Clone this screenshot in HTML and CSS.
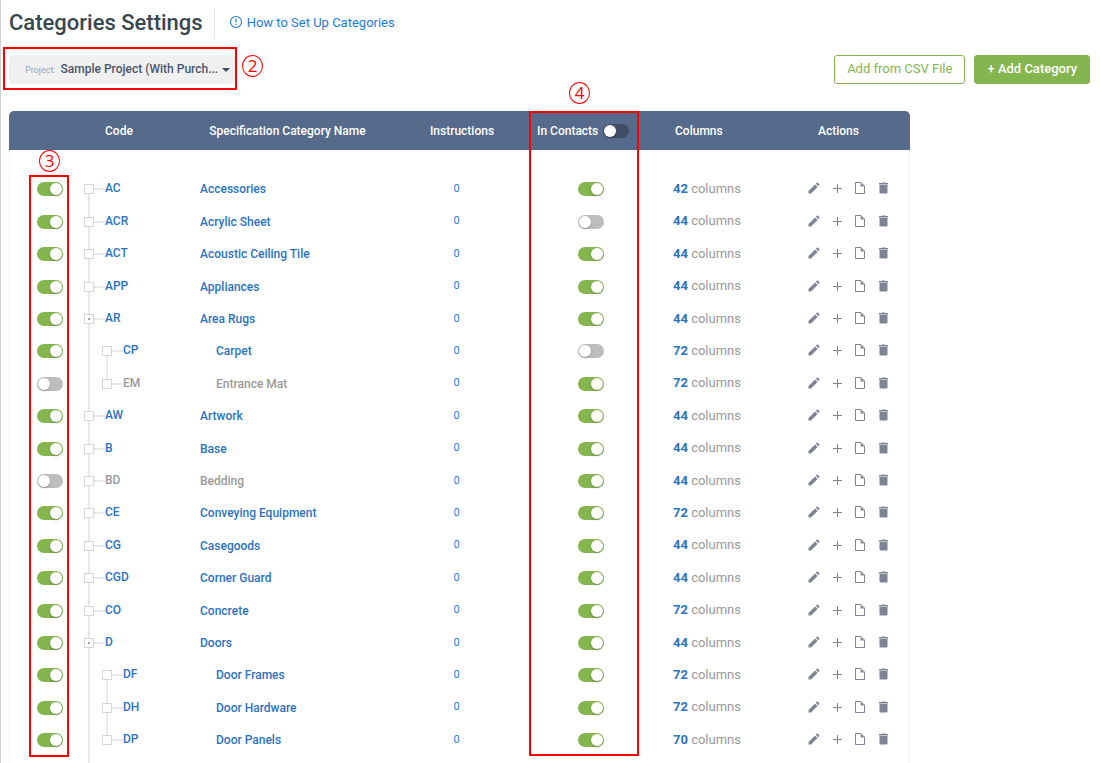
FILE: index.html
```html
<!DOCTYPE html>
<html lang="en">
<head>
    <meta charset="utf-8">
    <meta name="viewport" content="width=device-width">
    <title>Categories Settings</title>
    <link rel="stylesheet" href="styles.css">
</head>
<body>
    <svg class="sprite" aria-hidden="true">
        <symbol id="icon-edit" viewBox="0 0 12 12">
            <path d="M0.5 11.5v-2.5l6.6-6.6 2.5 2.5-6.6 6.6zM7.8 1.7l0.9-0.9q0.6-0.6 1.2 0l1.3 1.3q0.6 0.6 0 1.2l-0.9 0.9z" fill="currentColor"/>
        </symbol>
        <symbol id="icon-add" viewBox="0 0 12 12">
            <path d="M6.5 2v9M2 6.5h9" fill="none" stroke="currentColor" stroke-width="1"/>
        </symbol>
        <symbol id="icon-copy" viewBox="0 0 12 12">
            <path d="M1.5 0.5h5.5l3.5 3.5v7.5h-9z" fill="none" stroke="currentColor" stroke-width="1" stroke-linejoin="round"/>
            <path d="M6.6 0.6v3.8h3.8z" fill="currentColor"/>
        </symbol>
        <symbol id="icon-delete" viewBox="0 0 12 12">
            <path d="M2 1h2.5l0.5-0.5h3l0.5 0.5h2.5v1.4h-9zM2.5 3h8v7.5q0 1-1 1h-6q-1 0-1-1z" fill="currentColor"/>
        </symbol>
    </svg>

    <main class="page">
        <header class="page-header">
            <h1>Categories Settings</h1>
            <a href="#help" class="help-link">
                <svg viewBox="0 0 14 14" aria-hidden="true">
                    <circle cx="7" cy="7" r="5.5" fill="none" stroke="currentColor" stroke-width="1.1"/>
                    <path d="M7 3.8v3.8M7 8.8v1.3" stroke="currentColor" stroke-width="1.2"/>
                </svg>
                How to Set Up Categories
            </a>
        </header>

        <div class="toolbar">
            <div class="project">
                <label for="project">Project:</label>
                <select id="project">
                    <option>Sample Project (With Purch...</option>
                </select>
            </div>
            <div class="buttons">
                <button type="button" class="btn">Add from CSV File</button>
                <button type="button" class="btn btn-primary">+ Add Category</button>
            </div>
        </div>

        <table class="categories">
            <colgroup>
                <col class="col-active">
                <col class="col-code">
                <col class="col-name">
                <col class="col-instructions">
                <col class="col-contacts">
                <col class="col-columns">
                <col class="col-actions">
            </colgroup>
            <thead>
                <tr>
                    <th></th>
                    <th class="code">Code</th>
                    <th class="name">Specification Category Name</th>
                    <th class="instructions">Instructions</th>
                    <th class="contacts">
                        <label>In Contacts <input type="checkbox" class="toggle"></label>
                    </th>
                    <th class="columns">Columns</th>
                    <th class="actions">Actions</th>
                </tr>
            </thead>
            <tbody id="rows"></tbody>
        </table>

        <div class="mark mark-project"></div>
        <div class="mark mark-active"></div>
        <div class="mark mark-contacts"></div>
        <span class="number number-project">2</span>
        <span class="number number-active">3</span>
        <span class="number number-contacts">4</span>
    </main>
    <script src="script.js"></script>
</body>
</html>
```
FILE: styles.css
```css
* {
    box-sizing: border-box;
}
body {
    margin: 0;
    overflow: hidden;
    font-family: Roboto, "Liberation Sans", sans-serif;
    font-size: 12px;
    color: #37474f;
    background-color: #fff;
}
button, select {
    font-family: inherit;
}
a {
    color: #2b73c2;
    text-decoration: none;
}
.sprite {
    display: none;
}
.page {
    position: relative;
    min-height: 100vh;
    padding: 8px 10px 0 8px;
    border-left: 1px solid #d0d0d0;
}

/* header */
.page-header {
    display: flex;
    align-items: center;
    height: 30px;
}
h1 {
    margin: 0;
    padding-right: 11px;
    font-size: 22px;
    font-weight: 500;
    line-height: 30px;
}
.help-link {
    display: flex;
    align-items: center;
    gap: 4px;
    height: 30px;
    padding: 0 0 2px 14px;
    border-left: 1px solid #e8e8e8;
    font-size: 13px;
    color: #1c7cdc;
}
.help-link svg {
    width: 14px;
    height: 14px;
}

/* toolbar */
.toolbar {
    display: flex;
    justify-content: space-between;
    margin-top: 17px;
}
.project {
    display: flex;
    align-items: center;
    height: 29px;
    padding: 0 6px 0 16px;
    border-radius: 4px;
    background-color: #f0f0f0;
}
.project::after {
    content: "";
    border: 4px solid transparent;
    border-top-color: #3d4a5f;
    border-bottom: 0;
}
.project label {
    font-size: 9px;
    color: #9fa3b3;
}
.project select {
    appearance: none;
    width: 161px;
    margin-left: 5px;
    padding: 0 0 2px;
    border: 0;
    background: none;
    font-size: 12px;
    font-weight: 500;
    color: #4a566b;
}
.buttons {
    display: flex;
    gap: 9px;
}
.btn {
    height: 29px;
    padding: 0 12px 2px;
    border: 1px solid #84b54f;
    border-radius: 3px;
    background-color: #fff;
    font-size: 13px;
    color: #84b54f;
}
.btn-primary {
    background-color: #84b54f;
    font-weight: 500;
    color: #fff;
}

/* table */
.categories {
    width: 100%;
    max-width: 901px;
    margin-top: 27px;
    border-spacing: 0;
    table-layout: fixed;
}
.col-active { width: 75px; }
.col-code { width: 106px; }
.col-name { width: 195px; }
.col-instructions { width: 143px; }
.col-contacts { width: 126px; }
.col-columns { width: 106px; }
.col-actions { width: 150px; }

th, td {
    padding: 0;
    text-align: left;
}
th {
    height: 39px;
    background-color: #566a8b;
    font-size: 12px;
    font-weight: 500;
    color: #fff;
}
th:first-child {
    border-top-left-radius: 5px;
}
th:last-child {
    border-top-right-radius: 5px;
}
th.code { padding-left: 21px; }
th.name { text-align: center; }
th.instructions { padding-left: 11px; text-align: center; }
th.contacts { padding-left: 9px; }
th.columns { padding-left: 21px; }
th.actions { padding-left: 7px; text-align: center; }
th label {
    display: flex;
    align-items: center;
    gap: 5px;
}

td {
    height: 32px;
}
tr:nth-child(5n+3) td, tr:nth-child(5n) td {
    height: 33px;
}
.spacer td {
    height: 23px;
}
td:first-child {
    padding-left: 27px;
    border-left: 1px solid #f2f2f4;
}
td:last-child {
    padding-left: 48px;
    border-right: 1px solid #f2f2f4;
}
td.name {
    padding-left: 10px;
    font-weight: 500;
}
.child td.name {
    padding-left: 26px;
}
td.instructions, td.contacts {
    text-align: center;
}
td.instructions {
    padding-bottom: 2px;
    font-size: 11px;
}
td.instructions a {
    color: #1c7cdc;
}
td.columns {
    padding: 0 0 2px 19px;
    font-size: 13px;
    color: #999;
}
td.columns a {
    font-weight: 700;
}
.inactive .code, .inactive .name a {
    color: #999;
}

/* tree lines behind the code column */
td.tree {
    background-image: linear-gradient(#e8e8ee, #e8e8ee), linear-gradient(#e8e8ee, #e8e8ee);
    background-repeat: no-repeat;
    background-position: 4px 0, 22px 0;
    background-size: 2px 100%, 0 0;
}
.first td.tree {
    background-position: 4px 100%;
    background-size: 2px 50%, 0 0;
}
.child td.tree {
    background-size: 2px 100%, 2px 100%;
}
.child-first td.tree {
    background-position: 4px 0, 22px 100%;
    background-size: 2px 100%, 2px 50%;
}
.child-last td.tree {
    background-size: 2px 100%, 2px 50%;
}
.node {
    display: flex;
    align-items: center;
}
.child .node {
    padding-left: 18px;
}
.node::after {
    content: "";
    order: 1;
    width: 11px;
    height: 2px;
    background-color: #e8e8ee;
}
.box {
    display: flex;
    align-items: center;
    justify-content: center;
    width: 10px;
    height: 10px;
    padding: 0;
    border: 1px solid #d6d6de;
    background-color: #fff;
}
.parent .box::before {
    content: "";
    width: 2px;
    height: 2px;
    background-color: #a0a0a8;
}
.code {
    order: 2;
    font-weight: 500;
}
.node .code {
    padding-bottom: 2px;
}

/* toggles */
.toggle {
    appearance: none;
    display: block;
    width: 26px;
    height: 14px;
    margin: 0;
    padding: 1px;
    border-radius: 7px;
    background-color: #bdbdbd;
}
.toggle::before {
    content: "";
    display: block;
    width: 12px;
    height: 12px;
    border-radius: 50%;
    background-color: #fff;
    box-shadow: 0 1px 2px rgba(0, 0, 0, 0.25);
}
.toggle:checked {
    background-color: #84b54f;
}
.toggle:checked::before {
    margin-left: auto;
}
td.contacts .toggle {
    margin: 0 auto;
}
th .toggle {
    background-color: #3f4d66;
}

/* row actions */
.action-list {
    display: flex;
    gap: 11px;
    padding-bottom: 2px;
}
.action-list button {
    display: block;
    width: 12px;
    height: 12px;
    padding: 0;
    border: 0;
    background: none;
    color: #808394;
}
.action-list svg {
    display: block;
    width: 12px;
    height: 12px;
}

/* numbered marks over the page */
.mark {
    position: absolute;
    border: 2px solid #f00;
    pointer-events: none;
}
.mark-project {
    top: 47px;
    left: 2px;
    width: 234px;
    height: 43px;
}
.mark-active {
    top: 175px;
    left: 28px;
    width: 40px;
    height: 582px;
}
.mark-contacts {
    top: 111px;
    left: 528px;
    width: 110px;
    height: 645px;
}
.number {
    position: absolute;
    width: 21px;
    height: 22px;
    border: 1px solid #f00;
    border-radius: 50%;
    font-family: "Open Sans", sans-serif;
    font-size: 17px;
    line-height: 20px;
    text-align: center;
    color: #f00;
}
.number-project {
    top: 55px;
    left: 241px;
}
.number-active {
    top: 150px;
    left: 38px;
}
.number-contacts {
    top: 82px;
    left: 568px;
}
```
FILE: script.js
```js
// level: 1 = sub category, left out for root categories
const categories = [
    { code: "AC", name: "Accessories", columns: 42 },
    { code: "ACR", name: "Acrylic Sheet", columns: 44, noContacts: true },
    { code: "ACT", name: "Acoustic Ceiling Tile", columns: 44 },
    { code: "APP", name: "Appliances", columns: 44 },
    { code: "AR", name: "Area Rugs", columns: 44 },
    { code: "CP", name: "Carpet", columns: 72, level: 1, noContacts: true },
    { code: "EM", name: "Entrance Mat", columns: 72, level: 1, inactive: true },
    { code: "AW", name: "Artwork", columns: 44 },
    { code: "B", name: "Base", columns: 44 },
    { code: "BD", name: "Bedding", columns: 44, inactive: true },
    { code: "CE", name: "Conveying Equipment", columns: 72 },
    { code: "CG", name: "Casegoods", columns: 44 },
    { code: "CGD", name: "Corner Guard", columns: 44 },
    { code: "CO", name: "Concrete", columns: 72 },
    { code: "D", name: "Doors", columns: 44 },
    { code: "DF", name: "Door Frames", columns: 72, level: 1 },
    { code: "DH", name: "Door Hardware", columns: 72, level: 1 },
    { code: "DP", name: "Door Panels", columns: 70, level: 1 },
];

function isChild(i) {
    return Boolean(categories[i] && categories[i].level);
}

function rowClass(cat, i) {
    const names = [];
    if (i == 0) names.push("first");
    if (cat.inactive) names.push("inactive");
    if (cat.level) {
        names.push("child");
        if (!isChild(i - 1)) names.push("child-first");
        if (!isChild(i + 1)) names.push("child-last");
    } else if (isChild(i + 1)) {
        names.push("parent");
    }
    return names.join(" ");
}

function action(icon, label) {
    return `<button type="button" aria-label="${label}"><svg><use href="#icon-${icon}"/></svg></button>`;
}

function row(cat, i) {
    return `<tr class="${rowClass(cat, i)}">
        <td><input type="checkbox" class="toggle" aria-label="${cat.name} active" ${cat.inactive ? "" : "checked"}></td>
        <td class="tree"><div class="node">
            <button type="button" class="box" aria-label="Expand ${cat.name}"></button>
            <a href="#${cat.code}" class="code">${cat.code}</a>
        </div></td>
        <td class="name"><a href="#${cat.code}">${cat.name}</a></td>
        <td class="instructions"><a href="#instructions">0</a></td>
        <td class="contacts"><input type="checkbox" class="toggle" aria-label="${cat.name} in contacts" ${cat.noContacts ? "" : "checked"}></td>
        <td class="columns"><a href="#columns">${cat.columns}</a> columns</td>
        <td><div class="action-list">
            ${action("edit", "Edit")}${action("add", "Add")}${action("copy", "Copy")}${action("delete", "Delete")}
        </div></td>
    </tr>`;
}

document.getElementById("rows").innerHTML =
    `<tr class="spacer"><td colspan="6"></td><td></td></tr>` +
    categories.map(row).join("") +
    `<tr><td></td><td class="tree"></td><td colspan="4"></td><td></td></tr>`;
```
